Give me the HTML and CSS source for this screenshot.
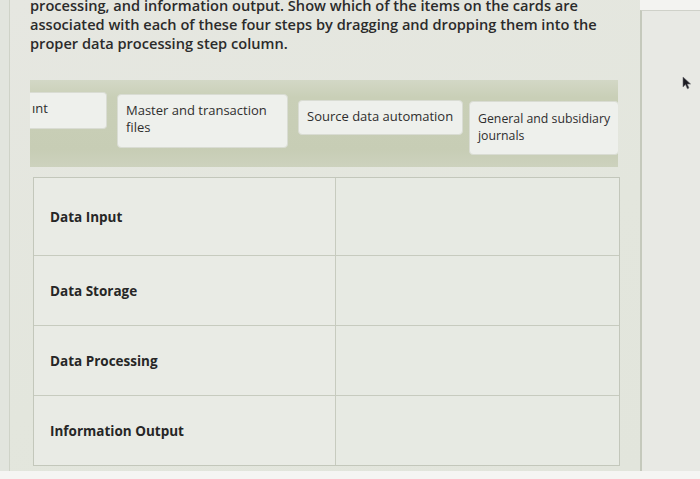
FILE: index.html
```html
<!DOCTYPE html>
<html lang="en">
<head>
    <meta charset="UTF-8">
    <meta name="viewport" content="width=device-width, initial-scale=1.0">
    <title>Data Processing Steps</title>
    <link rel="stylesheet" href="styles.css">
</head>
<body>
    <div class="screen">
        <div class="edge"></div>
        <div class="panel">
            <p class="prompt">processing, and information output. Show which of the items on the cards are associated with each of these four steps by dragging and dropping them into the proper data processing step column.</p>

            <div class="card-bank">
                <div class="card card-cut">ınt</div>
                <div class="card card-master">Master and transaction files</div>
                <div class="card card-source">Source data automation</div>
                <div class="card card-general">General and subsidiary journals</div>
            </div>

            <div class="drop-table">
                <div class="drop-row">
                    <div class="step">Data Input</div>
                    <div class="slot"></div>
                </div>
                <div class="drop-row">
                    <div class="step">Data Storage</div>
                    <div class="slot"></div>
                </div>
                <div class="drop-row">
                    <div class="step">Data Processing</div>
                    <div class="slot"></div>
                </div>
                <div class="drop-row">
                    <div class="step">Information Output</div>
                    <div class="slot"></div>
                </div>
            </div>
        </div>
        <div class="side">
            <svg class="pointer" width="10" height="14" viewBox="0 0 10 14">
                <path d="M1 1 L1 11 L3.5 8.6 L5.4 12.8 L7 12 L5.2 8 L8.6 8 Z" fill="#1c1c22" stroke="#6a6a70" stroke-width="0.6"/>
            </svg>
        </div>
    </div>
    <div class="bottom"></div>
</body>
</html>
```

FILE: styles.css
```css
body {
    margin: 0;
    font-family: 'Open Sans', 'DejaVu Sans', sans-serif;
    background: #f3f3f1;
    color: #2a2a2a;
    overflow: hidden;
}
.screen {
    display: flex;
    height: 471px;
}
.edge {
    width: 9px;
    background: #e2e5de;
    border-right: 1px solid #cfd3c8;
}
.panel {
    width: 630px;
    background: linear-gradient(160deg, #e6e7e1, #e3e6dd 60%, #e2e5dc);
    padding: 0 0 0 20px;
    box-sizing: border-box;
}
.prompt {
    margin: -4px 0 0 0;
    width: 580px;
    font-size: 14.6px;
    font-weight: 600;
    line-height: 19px;
    color: #2b2b2b;
}
.card-bank {
    display: flex;
    align-items: flex-start;
    gap: 10px;
    width: 588px;
    height: 87px;
    margin-top: 27px;
    padding-top: 12px;
    box-sizing: border-box;
    background: linear-gradient(#d3d8c6, #c9cfb7 20%, #c7cdb5 80%, #cdd2be);
    overflow: hidden;
}
.card {
    flex: none;
    background: #eef0ec;
    border: 1px solid #d9dcd3;
    border-radius: 4px;
    padding: 7px 7px 11px 8px;
    font-size: 13px;
    line-height: 17px;
    color: #2e2e2e;
    box-sizing: border-box;
}
.card-cut {
    width: 77px;
    padding-left: 2px;
    border-left: none;
    border-radius: 0 4px 4px 0;
}
.card-master {
    width: 171px;
    margin-top: 2px;
}
.card-source {
    width: 165px;
    margin-top: 8px;
    padding-bottom: 9px;
}
.card-general {
    width: 150px;
    margin-top: 9px;
    margin-left: -4px;
    padding: 8px 4px 10px 8px;
    font-size: 12.3px;
}
.drop-table {
    width: 585px;
    margin: 10px 0 0 3px;
    border: 1px solid #c3c7bb;
    background: #e9ebe5;
}
.drop-row {
    display: flex;
    height: 69px;
    border-top: 1px solid #c7cbbf;
}
.drop-row:first-child {
    border-top: none;
    height: 77px;
}
.step {
    width: 302px;
    display: flex;
    align-items: center;
    padding-left: 16px;
    box-sizing: border-box;
    border-right: 1px solid #c7cbbf;
    font-size: 13.5px;
    font-weight: 700;
    color: #262626;
}
.slot {
    flex: 1;
    background: #e7eae3;
}
.side {
    flex: 1;
    background: #e8e9e4;
    border-left: 2px solid #c5c9bc;
    border-top: 1px solid #cfd1c9;
    margin-top: 10px;
    padding: 65px 0 0 40px;
}
.pointer {
    display: block;
}
.bottom {
    height: 8px;
    background: #f5f5f3;
}
```
